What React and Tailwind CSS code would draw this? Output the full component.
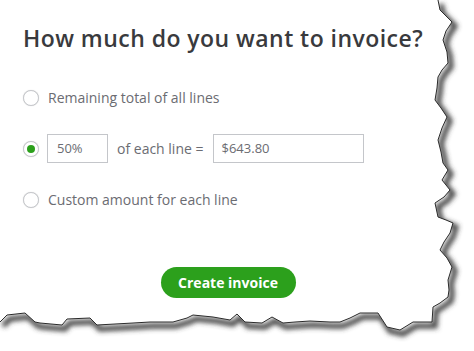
import React from "react";

const rightEdge =
  "M438,0 L440,10 L446,16 L452,22 L446,31 L443,40 L447,52 L448,63 L442,70 L438,77 L437,88 L435,100 L441,108 L447,117 L442,128 L438,140 L441,152 L443,163 L448,170 L442,180 L450,190 L444,197 L435,203 L438,217 L446,220 L453,223 L450,233 L444,242 L440,250 L447,258 L452,267 L448,280 L449,290 L448,297 L440,303 L433,307 L432,322";
const bottomEdge =
  " L413,322 L400,330 L387,327 L378,313 L360,313 L350,318 L340,322 L330,322 L310,321 L295,322 L283,323 L272,317 L262,323 L245,322 L237,314 L230,320 L213,317 L193,315 L187,318 L173,322 L150,322 L133,323 L115,324 L97,325 L90,318 L67,319 L62,325 L40,323 L35,322 L25,313 L7,315 L0,322";

const TornEdge = () => (
  <svg
    className="absolute inset-0 pointer-events-none"
    width="474"
    height="351"
    viewBox="0 0 474 351"
  >
    <defs>
      <filter id="blur" x="-10%" y="-10%" width="120%" height="120%">
        <feGaussianBlur stdDeviation="2.5" />
      </filter>
    </defs>
    <path
      d={rightEdge + bottomEdge}
      transform="translate(3 4)"
      fill="none"
      stroke="#3a3a3a"
      strokeWidth="5"
      filter="url(#blur)"
    />
    <path d={rightEdge + bottomEdge + " L0,0 Z"} fill="#fff" />
    <path
      d={rightEdge + bottomEdge}
      fill="none"
      stroke="#2b2b2b"
      strokeWidth="1"
    />
  </svg>
);

const Radio = ({ checked }) => (
  <span className="flex h-4 w-4 shrink-0 items-center justify-center rounded-full border border-[#c6c8cc] bg-white shadow-[0_0_1px_rgba(0,0,0,0.2)]">
    {checked && <span className="h-2 w-2 rounded-full bg-[#2ca01c]" />}
  </span>
);

const App = () => {
  return (
    <div
      className="relative h-[351px] w-[474px] overflow-hidden bg-white"
      style={{ fontFamily: "'Open Sans', 'Liberation Sans', sans-serif" }}
    >
      <TornEdge />
      <div className="relative flex flex-col pl-[23px] pt-[22px]">
        <h1 className="text-[23px] font-semibold leading-[32px] tracking-[0.45px] text-[#393a3d]">
          How much do you want to invoice?
        </h1>

        <div className="mt-[33px] flex items-center gap-[9px]">
          <Radio />
          <span className="text-[14px] text-[#6b6c72]">
            Remaining total of all lines
          </span>
        </div>

        <div className="mt-[26px] flex items-center">
          <Radio checked />
          <div className="ml-[8px] flex h-[29px] w-[61px] items-center border border-[#c4c6ca] pl-[9px] text-[13px] text-[#6b6c72]">
            50%
          </div>
          <span className="ml-[9px] text-[14px] text-[#6b6c72]">
            of each line =
          </span>
          <div className="ml-[9px] flex h-[29px] w-[151px] items-center border border-[#c4c6ca] pl-[8px] text-[13px] text-[#6b6c72]">
            $643.80
          </div>
        </div>

        <div className="mt-[26px] flex items-center gap-[9px]">
          <Radio />
          <span className="text-[14px] text-[#6b6c72]">
            Custom amount for each line
          </span>
        </div>

        <div className="mt-[57px] flex w-[410px] justify-center">
          <button
            type="button"
            className="h-[31px] w-[135px] rounded-full bg-[#2ca01c] text-[14px] font-bold text-white"
          >
            Create invoice
          </button>
        </div>
      </div>
    </div>
  );
};

export default App;
